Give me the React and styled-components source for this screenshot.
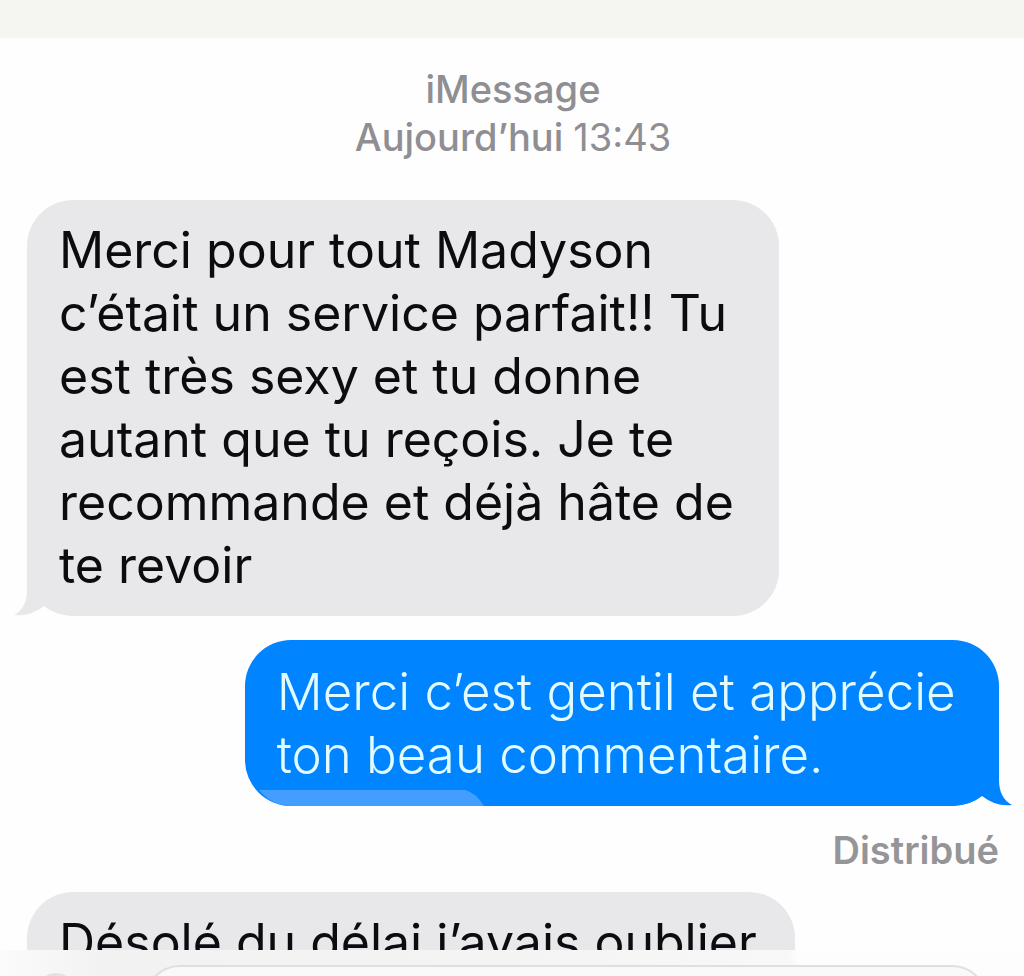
import React from 'react';
import styled, { createGlobalStyle } from 'styled-components';

const GlobalStyle = createGlobalStyle`
  * {
    box-sizing: border-box;
  }

  body {
    margin: 0;
    background: #fefefe;
    font-family: Inter, 'Liberation Sans', sans-serif;
  }
`;

const Screen = styled.div`
  display: flex;
  flex-direction: column;
  height: 100vh;
  overflow: hidden;
`;

const TopBar = styled.header`
  flex: none;
  height: 38px;
  background: #f5f6f1;
`;

const Thread = styled.main`
  flex: 1;
  min-height: 0;
  overflow: hidden;
  display: flex;
  flex-direction: column;
  padding: 27px 25px 0 27px;
`;

const ThreadHeader = styled.div`
  flex: none;
  margin-bottom: 39px;
  text-align: center;
  font-size: 38px;
  line-height: 48px;
  font-weight: 500;
  color: #8f8f93;
`;

const Service = styled.div``;

const Time = styled.time`
  font-weight: 400;
`;

const Bubble = styled.div`
  position: relative;
  flex: none;
  align-self: ${props => props.$outgoing ? 'flex-end' : 'flex-start'};
  width: ${props => props.$width};
  margin-bottom: 24px;
  padding: ${props => props.$outgoing ? '20px 32px' : '19px 32px'};
  border-radius: 46px;
  background: ${props => props.$outgoing ? '#0084ff' : '#e8e8eb'};
  color: ${props => props.$outgoing ? '#e2fbff' : '#0c0c10'};
  font-size: ${props => props.$outgoing ? '51px' : '50px'};
  line-height: 63px;
  font-weight: ${props => props.$outgoing ? 300 : 400};
`;

const BubbleText = styled.p`
  position: relative;
  margin: 0;
`;

const Tail = styled.svg`
  position: absolute;
  bottom: 0;
  ${props => props.$outgoing ? 'right: -14px;' : 'left: -14px; transform: scaleX(-1);'}
  width: 74px;
  height: 46px;
`;

const Sheen = styled.svg`
  position: absolute;
  left: 0;
  bottom: 0;
  width: 240px;
  height: 46px;
`;

const Status = styled.div`
  flex: none;
  align-self: flex-end;
  margin: -4px 0 18px;
  font-size: 38px;
  line-height: 48px;
  font-weight: 600;
  color: #959598;
`;

const Composer = styled.form`
  flex: none;
  display: flex;
  align-items: flex-start;
  gap: 68px;
  height: 26px;
  padding: 15px 36px 0 36px;
  overflow: hidden;
  background: linear-gradient(90deg, #fbfbfb 0, #f2f2f3 10%, #f4f4f5 50%, #f8f8f9 77%, #fdfdfd 78%);
`;

const AddButton = styled.button`
  flex: none;
  width: 40px;
  height: 40px;
  margin-top: 8px;
  padding: 0;
  border: 0;
  border-radius: 50%;
  background: #e2e2e4;
`;

const MessageInput = styled.input`
  flex: 1;
  min-width: 0;
  height: 72px;
  padding: 0 30px;
  border: 2px solid #dfdfe2;
  border-radius: 36px;
  background: #f9f9f9;
  font: inherit;
  font-size: 38px;
`;

const BubbleTail = ({ outgoing }) => (
  <Tail $outgoing={outgoing} viewBox="0 0 74 46" aria-hidden="true">
    <path d="M14 46 Q32 45 43 36 Q52 46 74 46 L14 46Z" fill="#fefefe" />
    <path
      d="M40 0 H60 V20 Q60 38 73 45 Q57 47 43 36 Q32 45 14 46 V0Z"
      fill={outgoing ? '#0084ff' : '#e8e8eb'}
    />
  </Tail>
);

const App = () => (
  <>
    <GlobalStyle />
    <Screen>
      <TopBar />
      <Thread>
        <ThreadHeader>
          <Service>iMessage</Service>
          Aujourd’hui <Time dateTime="13:43">13:43</Time>
        </ThreadHeader>

        <Bubble $width="77.4%">
          <BubbleTail />
          <BubbleText>
            Merci pour tout Madyson c’était un service parfait!! Tu est très sexy et tu donne
            autant que tu reçois. Je te recommande et déjà hâte de te revoir
          </BubbleText>
        </Bubble>

        <Bubble $outgoing $width="77.6%">
          <Sheen viewBox="0 0 240 46" aria-hidden="true">
            <path d="M14 30 H220 Q231 33 239 46 H46 Q27 46 14 30Z" fill="#449eff" />
          </Sheen>
          <BubbleTail outgoing />
          <BubbleText>Merci c’est gentil et apprécie ton beau commentaire.</BubbleText>
        </Bubble>
        <Status>Distribué</Status>

        <Bubble $width="79%">
          <BubbleText>Désolé du délai j’avais oublier</BubbleText>
        </Bubble>
      </Thread>

      <Composer>
        <AddButton type="button" aria-label="Ajouter" />
        <MessageInput type="text" aria-label="Message" />
      </Composer>
    </Screen>
  </>
);

export default App;
